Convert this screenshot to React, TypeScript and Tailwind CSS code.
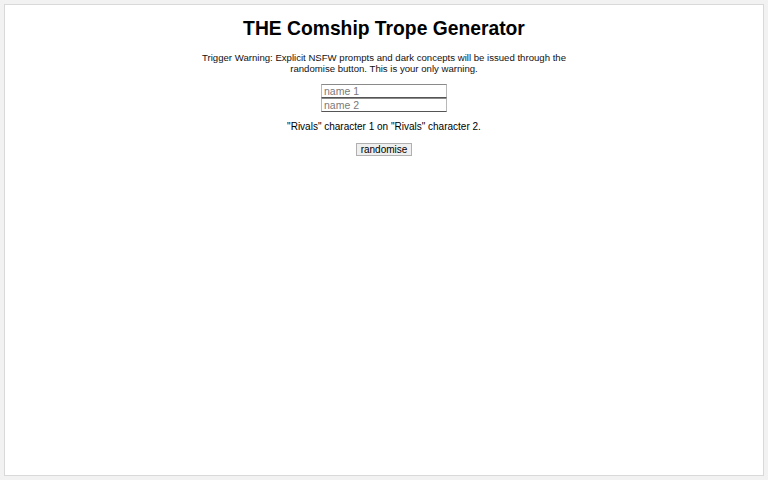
import React, { useState } from "react";

const tropes = ["Rivals", "Roommates", "Childhood friends", "Enemies"];

const field =
  "h-[14px] w-[126px] border border-x-[#b8b8b8] border-t-[#8a8a8a] border-b-[#555] px-[2px] text-[10.5px] leading-[12px] placeholder:text-[#7a7a7a] outline-none";

export default function App() {
  const [a, setA] = useState("");
  const [b, setB] = useState("");
  const [t1, setT1] = useState("Rivals");
  const [t2, setT2] = useState("Rivals");

  const roll = () => {
    setT1(tropes[Math.floor(Math.random() * tropes.length)]);
    setT2(tropes[Math.floor(Math.random() * tropes.length)]);
  };

  return (
    <div className="min-h-[480px] bg-[#f2f2f2] p-[4px]" style={{ fontFamily: '"Liberation Sans", Arial, sans-serif' }}>
      <div className="flex h-[472px] flex-col items-center border border-[#d9d9d9] bg-white text-black">
        <h1 className="mt-[12px] text-[19.3px] font-bold leading-[24px]">THE Comship Trope Generator</h1>
        <p className="mt-[11px] w-[370px] text-center text-[9.6px] leading-[11px] text-[#111]">
          Trigger Warning: Explicit NSFW prompts and dark concepts will be issued through the randomise button. This is your only warning.
        </p>
        <div className="mt-[10px] flex flex-col">
          <input value={a} onChange={(e) => setA(e.target.value)} placeholder="name 1" className={field} />
          <input value={b} onChange={(e) => setB(e.target.value)} placeholder="name 2" className={field} />
        </div>
        <p className="mt-[9px] text-[10px] leading-[12px]">
          "{t1}" {a || "character 1"} on "{t2}" {b || "character 2"}.
        </p>
        <button
          onClick={roll}
          className="mt-[10px] h-[13px] border border-[#b0b0b0] bg-[#efefef] px-[4px] text-[10px] leading-[11px]"
        >
          randomise
        </button>
      </div>
    </div>
  );
}
